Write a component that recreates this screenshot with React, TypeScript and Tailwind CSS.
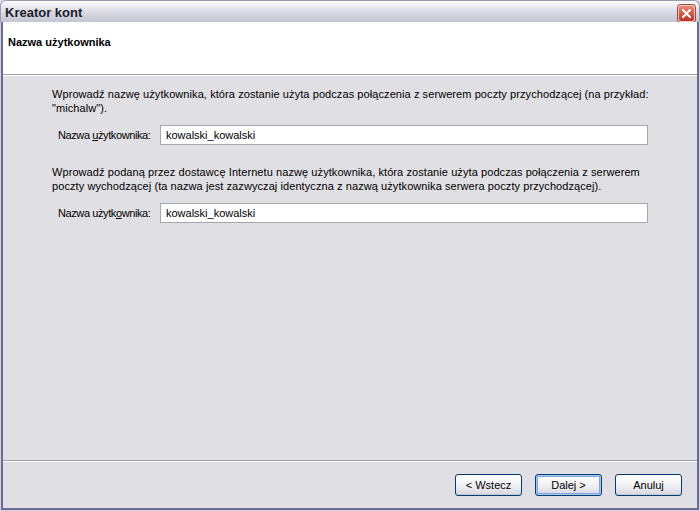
import React from "react";

const font = { fontFamily: '"Liberation Sans", Arial, sans-serif' };

function Btn({ label, def }: { label: string; def?: boolean }) {
  return (
    <div
      className={`w-[67px] h-[22px] rounded-[3px] border border-[#003c74] bg-gradient-to-b from-[#ffffff] via-[#f2f2f6] to-[#d6d6e0] flex items-center justify-center text-[11px] text-black ${
        def ? "shadow-[inset_0_0_0_1px_#a8c8f0,inset_0_0_0_2px_#7ea6dc]" : "shadow-[inset_0_-1px_0_#c8c8d4]"
      }`}
    >
      {label}
    </div>
  );
}

export default function App() {
  return (
    <div className="w-[700px] h-[511px] flex flex-col bg-[#e0dfe3] overflow-hidden" style={font}>
      {/* title bar */}
      <div className="h-[22px] shrink-0 rounded-t-[6px] bg-gradient-to-b from-[#fbfbfd] via-[#dcdce6] to-[#c4c4d2] border-t border-x border-[#9a9ab4] flex items-center justify-between pl-[4px] pr-[4px]">
        <span className="text-[13px] font-bold text-[#1c1c2c] leading-none pt-[1px]">Kreator kont</span>
        <div className="w-[17px] h-[17px] mt-[4px] rounded-[3px] border border-[#f4c8c0] bg-gradient-to-b from-[#e68a78] via-[#d45844] to-[#b8382a] flex items-center justify-center shadow-[0_0_0_1px_#a04838]">
          <svg width="9" height="9" viewBox="0 0 9 9">
            <path d="M1 1 L8 8 M8 1 L1 8" stroke="#ffffff" strokeWidth="2" strokeLinecap="square" />
          </svg>
        </div>
      </div>
      {/* frame */}
      <div className="flex-1 flex flex-col border-x border-b border-[#d4d4de]">
        <div className="flex-1 flex flex-col border-x-2 border-b-2 border-[#6c6c90]">
          {/* header */}
          <div className="h-[52px] shrink-0 bg-white pl-[5px] pt-[13px]">
            <div className="text-[11px] font-bold text-black leading-[14px]">Nazwa użytkownika</div>
          </div>
          <div className="h-[1px] bg-[#a0a0a8]" />
          <div className="h-[1px] bg-white" />
          {/* body */}
          <div className="flex-1 flex flex-col pl-[49px] pt-[11px] text-[11px] leading-[14px] text-black">
            <p className="whitespace-nowrap tracking-[0.08px]">
              Wprowadź nazwę użytkownika, która zostanie użyta podczas połączenia z serwerem poczty przychodzącej (na przykład:
              <br />
              "michalw").
            </p>
            <div className="flex items-center mt-[10px]">
              <span className="w-[108px] pl-[6px] tracking-[-0.4px]">
                Nazwa <span className="underline">u</span>żytkownika:
              </span>
              <div className="w-[488px] h-[20px] bg-white border border-[#a3a8b0] flex items-center pl-[5px]">
                kowalski_kowalski
              </div>
            </div>
            <p className="whitespace-nowrap mt-[20px] tracking-[0.08px]">
              Wprowadź podaną przez dostawcę Internetu nazwę użytkownika, która zostanie użyta podczas połączenia z serwerem
              <br />
              poczty wychodzącej (ta nazwa jest zazwyczaj identyczna z nazwą użytkownika serwera poczty przychodzącej).
            </p>
            <div className="flex items-center mt-[10px]">
              <span className="w-[108px] pl-[6px] tracking-[-0.4px]">
                Nazwa użytk<span className="underline">o</span>wnika:
              </span>
              <div className="w-[488px] h-[20px] bg-white border border-[#a3a8b0] flex items-center pl-[5px]">
                kowalski_kowalski
              </div>
            </div>
          </div>
          <div className="h-[1px] bg-[#a0a0a8]" />
          <div className="h-[1px] bg-white" />
          {/* footer */}
          <div className="h-[46px] shrink-0 flex justify-end items-start pt-[12px] pr-[15px] gap-[13px]">
            <Btn label="< Wstecz" />
            <Btn label="Dalej >" def />
            <Btn label="Anuluj" />
          </div>
        </div>
      </div>
    </div>
  );
}
